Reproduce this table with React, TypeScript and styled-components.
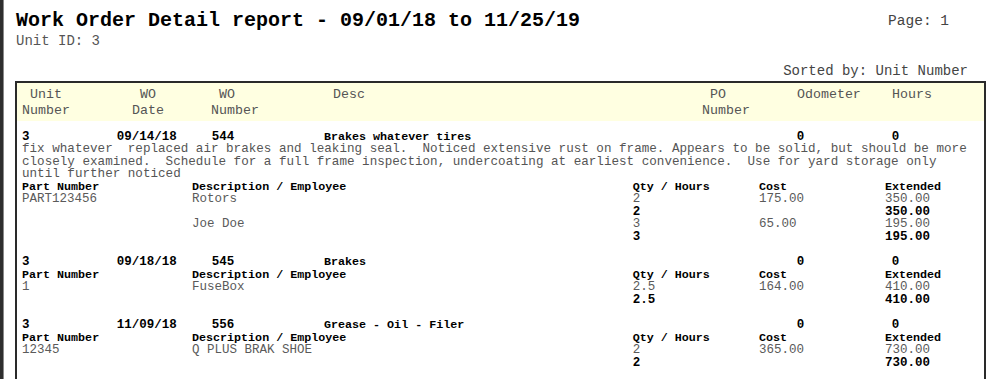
import React from "react";
import styled, { createGlobalStyle } from "styled-components";

const GlobalStyle = createGlobalStyle`
  html, body {
    margin: 0;
    padding: 0;
    background: #ffffff;
    overflow: hidden;
  }
`;

const mono = `"Liberation Mono", "Courier New", monospace`;

const Viewer = styled.div`
  display: flex;
  height: 100vh;
  border-left: 3px solid #2e2e2e;
  box-sizing: border-box;
  overflow: hidden;
`;

const Page = styled.div`
  flex: 1;
  border-left: 1px solid #8a8a8a;
  padding: 9px 14px 0 11px;
  font-family: ${mono};
  color: #000;
`;

const TopBar = styled.div`
  display: flex;
  justify-content: space-between;
  align-items: flex-start;
`;

const Title = styled.h1`
  margin: 0;
  padding-left: 1px;
  font-size: 20px;
  line-height: 24px;
  font-weight: bold;
`;

const PageNo = styled.div`
  margin-right: 37px;
  font-size: 14.5px;
  line-height: 24px;
  color: #444;
`;

const UnitId = styled.div`
  padding-left: 1px;
  font-size: 14px;
  line-height: 16px;
  color: #555;
`;

const Sorted = styled.div`
  margin-top: 13px;
  padding-right: 18px;
  text-align: right;
  font-size: 14px;
  line-height: 18px;
  color: #444;
`;

const Table = styled.div`
  margin-top: 1px;
  border: 2px solid #2a2a2a;
  border-bottom: none;
  min-height: 420px;
`;

const HeadRow = styled.div`
  display: grid;
  grid-template-columns: 110px 79px 114px 377px 95px 95px 1fr;
  padding: 4px 5px 2px;
  background: #ffffe1;
  font-size: 13.3px;
  line-height: 16px;
  color: #555;
  white-space: pre;
`;

const Body = styled.div`
  padding: 9.5px 5px 0;
`;

const Block = styled.div`
  margin-bottom: 13px;
`;

const WoRow = styled.div`
  display: grid;
  grid-template-columns: 94.7px 95px 112.3px 472.7px 95px 1fr;
  font-size: 12.5px;
  line-height: 12.5px;
  font-weight: bold;
  color: #000;
`;

const WoDesc = styled.span`
  font-size: 11.7px;
`;

const Notes = styled.div`
  font-size: 12.6px;
  line-height: 12.6px;
  color: #555;
  white-space: pre-wrap;
`;

const PartGrid = styled.div`
  display: grid;
  grid-template-columns: 170px 440.7px 126.3px 126px 1fr;
  line-height: 12.5px;
  white-space: pre;
`;

const PartHead = styled(PartGrid)`
  font-size: 11.7px;
  font-weight: bold;
  color: #000;
`;

const PartLine = styled(PartGrid)<{ $total?: boolean }>`
  font-size: 12.5px;
  font-weight: ${(p) => (p.$total ? "bold" : "normal")};
  color: ${(p) => (p.$total ? "#000" : "#5a5a5a")};
`;

type Item = {
  part: string;
  desc: string;
  qty: string;
  cost: string;
  ext: string;
};

type Order = {
  unit: string;
  date: string;
  wo: string;
  desc: string;
  odo: string;
  hours: string;
  notes?: string;
  items: Item[];
};

const orders: Order[] = [
  {
    unit: "3",
    date: "09/14/18",
    wo: "544",
    desc: "Brakes whatever tires",
    odo: "0",
    hours: "0",
    notes:
      "fix whatever  replaced air brakes and leaking seal.  Noticed extensive rust on frame. Appears to be solid, but should be more closely examined.  Schedule for a full frame inspection, undercoating at earliest convenience.  Use for yard storage only until further noticed",
    items: [
      { part: "PART123456", desc: "Rotors", qty: "2", cost: "175.00", ext: "350.00" },
      { part: "", desc: "Joe Doe", qty: "3", cost: "65.00", ext: "195.00" },
    ],
  },
  {
    unit: "3",
    date: "09/18/18",
    wo: "545",
    desc: "Brakes",
    odo: "0",
    hours: "0",
    items: [{ part: "1", desc: "FuseBox", qty: "2.5", cost: "164.00", ext: "410.00" }],
  },
  {
    unit: "3",
    date: "11/09/18",
    wo: "556",
    desc: "Grease - Oil - Filer",
    odo: "0",
    hours: "0",
    items: [{ part: "12345", desc: "Q PLUS BRAK SHOE", qty: "2", cost: "365.00", ext: "730.00" }],
  },
];

export default function App() {
  return (
    <>
      <GlobalStyle />
      <Viewer>
        <Page>
          <TopBar>
            <Title>Work Order Detail report - 09/01/18 to 11/25/19</Title>
            <PageNo>Page: 1</PageNo>
          </TopBar>
          <UnitId>Unit ID: 3</UnitId>
          <Sorted>Sorted by: Unit Number</Sorted>
          <Table>
            <HeadRow>
              <div>{" Unit\nNumber"}</div>
              <div>{" WO\nDate"}</div>
              <div>{" WO\nNumber"}</div>
              <div>{" Desc"}</div>
              <div>{" PO\nNumber"}</div>
              <div>{"Odometer"}</div>
              <div>{"Hours"}</div>
            </HeadRow>
            <Body>
              {orders.map((o) => (
                <Block key={o.wo}>
                  <WoRow>
                    <span>{o.unit}</span>
                    <span>{o.date}</span>
                    <span>{o.wo}</span>
                    <WoDesc>{o.desc}</WoDesc>
                    <span>{o.odo}</span>
                    <span>{o.hours}</span>
                  </WoRow>
                  {o.notes && <Notes>{o.notes}</Notes>}
                  <PartHead>
                    <span>Part Number</span>
                    <span>Description / Employee</span>
                    <span>Qty / Hours</span>
                    <span>Cost</span>
                    <span>Extended</span>
                  </PartHead>
                  {o.items.map((it, i) => (
                    <React.Fragment key={i}>
                      <PartLine>
                        <span>{it.part}</span>
                        <span>{it.desc}</span>
                        <span>{it.qty}</span>
                        <span>{it.cost}</span>
                        <span>{it.ext}</span>
                      </PartLine>
                      <PartLine $total>
                        <span />
                        <span />
                        <span>{it.qty}</span>
                        <span />
                        <span>{it.ext}</span>
                      </PartLine>
                    </React.Fragment>
                  ))}
                </Block>
              ))}
            </Body>
          </Table>
        </Page>
      </Viewer>
    </>
  );
}
